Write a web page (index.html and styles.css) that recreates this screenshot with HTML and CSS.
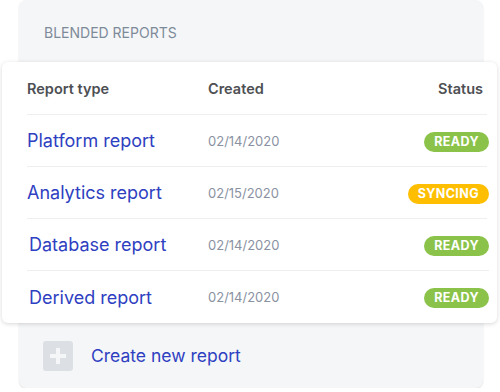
FILE: index.html
```html
<!DOCTYPE html>
<html lang="en">
<head>
    <meta charset="UTF-8">
    <meta name="viewport" content="width=device-width, initial-scale=1.0">
    <title>Blended Reports</title>
    <link rel="stylesheet" href="styles.css">
</head>
<body>
    <div class="panel">
        <div class="panel-title">Blended reports</div>
        <div class="card">
            <div class="row head">
                <div>Report type</div>
                <div>Created</div>
                <div class="status-head">Status</div>
            </div>
            <div class="row">
                <a href="#" class="name">Platform report</a>
                <div class="date">02/14/2020</div>
                <div class="status"><span class="badge ready">Ready</span></div>
            </div>
            <div class="row">
                <a href="#" class="name">Analytics report</a>
                <div class="date">02/15/2020</div>
                <div class="status"><span class="badge syncing">Syncing</span></div>
            </div>
            <div class="row shifted">
                <a href="#" class="name">Database report</a>
                <div class="date">02/14/2020</div>
                <div class="status"><span class="badge ready">Ready</span></div>
            </div>
            <div class="row shifted">
                <a href="#" class="name">Derived report</a>
                <div class="date">02/14/2020</div>
                <div class="status"><span class="badge ready">Ready</span></div>
            </div>
        </div>
        <div class="create">
            <span class="plus"></span>
            <a href="#">Create new report</a>
        </div>
    </div>
</body>
</html>
```

FILE: styles.css
```css
body {
    margin: 0;
    background-color: white;
    font-family: Inter, "Noto Sans", sans-serif;
}
.panel {
    margin-left: 19px;
    width: 464px;
    height: 388px;
    box-sizing: border-box;
    background-color: #f5f6f8;
    border-radius: 8px;
    box-shadow: 0 1px 2px rgba(0, 0, 0, 0.12);
    display: flex;
    flex-direction: column;
}
.panel-title {
    padding: 23px 0 0 25px;
    height: 20px;
    line-height: 20px;
    margin-bottom: 19px;
    font-size: 14px;
    color: #7d8b99;
    text-transform: uppercase;
}
.card {
    margin: 0 -14px 0 -17px;
    background-color: white;
    border-radius: 6px;
    box-shadow: 0 1px 4px rgba(0, 0, 0, 0.16);
    padding: 0 10px 0 25px;
}
.row {
    display: grid;
    grid-template-columns: 181px 1fr auto;
    align-items: center;
    height: 51px;
    border-bottom: 1px solid #eeeff1;
}
.row:last-child {
    border-bottom: none;
    height: 52px;
}
.row.head {
    height: 52px;
    font-size: 14.5px;
    font-weight: 600;
    color: #4d4f53;
}
.status-head {
    padding-right: 4px;
}
.row.shifted {
    padding-left: 2px;
    margin-right: -2px;
    grid-template-columns: 179px 1fr auto;
}
.name {
    font-size: 18px;
    color: #2e40c1;
    text-decoration: none;
}
.date {
    font-size: 13px;
    color: #8a92a2;
}
.status {
    text-align: right;
    margin-right: -2px;
}
.row.shifted .status {
    margin-right: 0;
}
.badge {
    display: inline-block;
    height: 20px;
    line-height: 20px;
    padding: 0 10px;
    border-radius: 10px;
    color: white;
    font-size: 12.5px;
    font-weight: 700;
    letter-spacing: 0.4px;
    text-transform: uppercase;
}
.badge.ready {
    background-color: #8bc34a;
}
.badge.syncing {
    background-color: #ffbf00;
}
.create {
    flex: 1;
    display: flex;
    align-items: center;
    gap: 18px;
    padding-left: 24px;
}
.create a {
    font-size: 17.5px;
    color: #2e40c1;
    text-decoration: none;
}
.plus {
    width: 30px;
    height: 30px;
    border-radius: 3px;
    background-color: #dcdfe4;
    position: relative;
}
.plus::before,
.plus::after {
    content: "";
    position: absolute;
    background-color: #f5f6f8;
    left: 50%;
    top: 50%;
    transform: translate(-50%, -50%);
}
.plus::before {
    width: 16px;
    height: 4px;
}
.plus::after {
    width: 4px;
    height: 16px;
}
```
